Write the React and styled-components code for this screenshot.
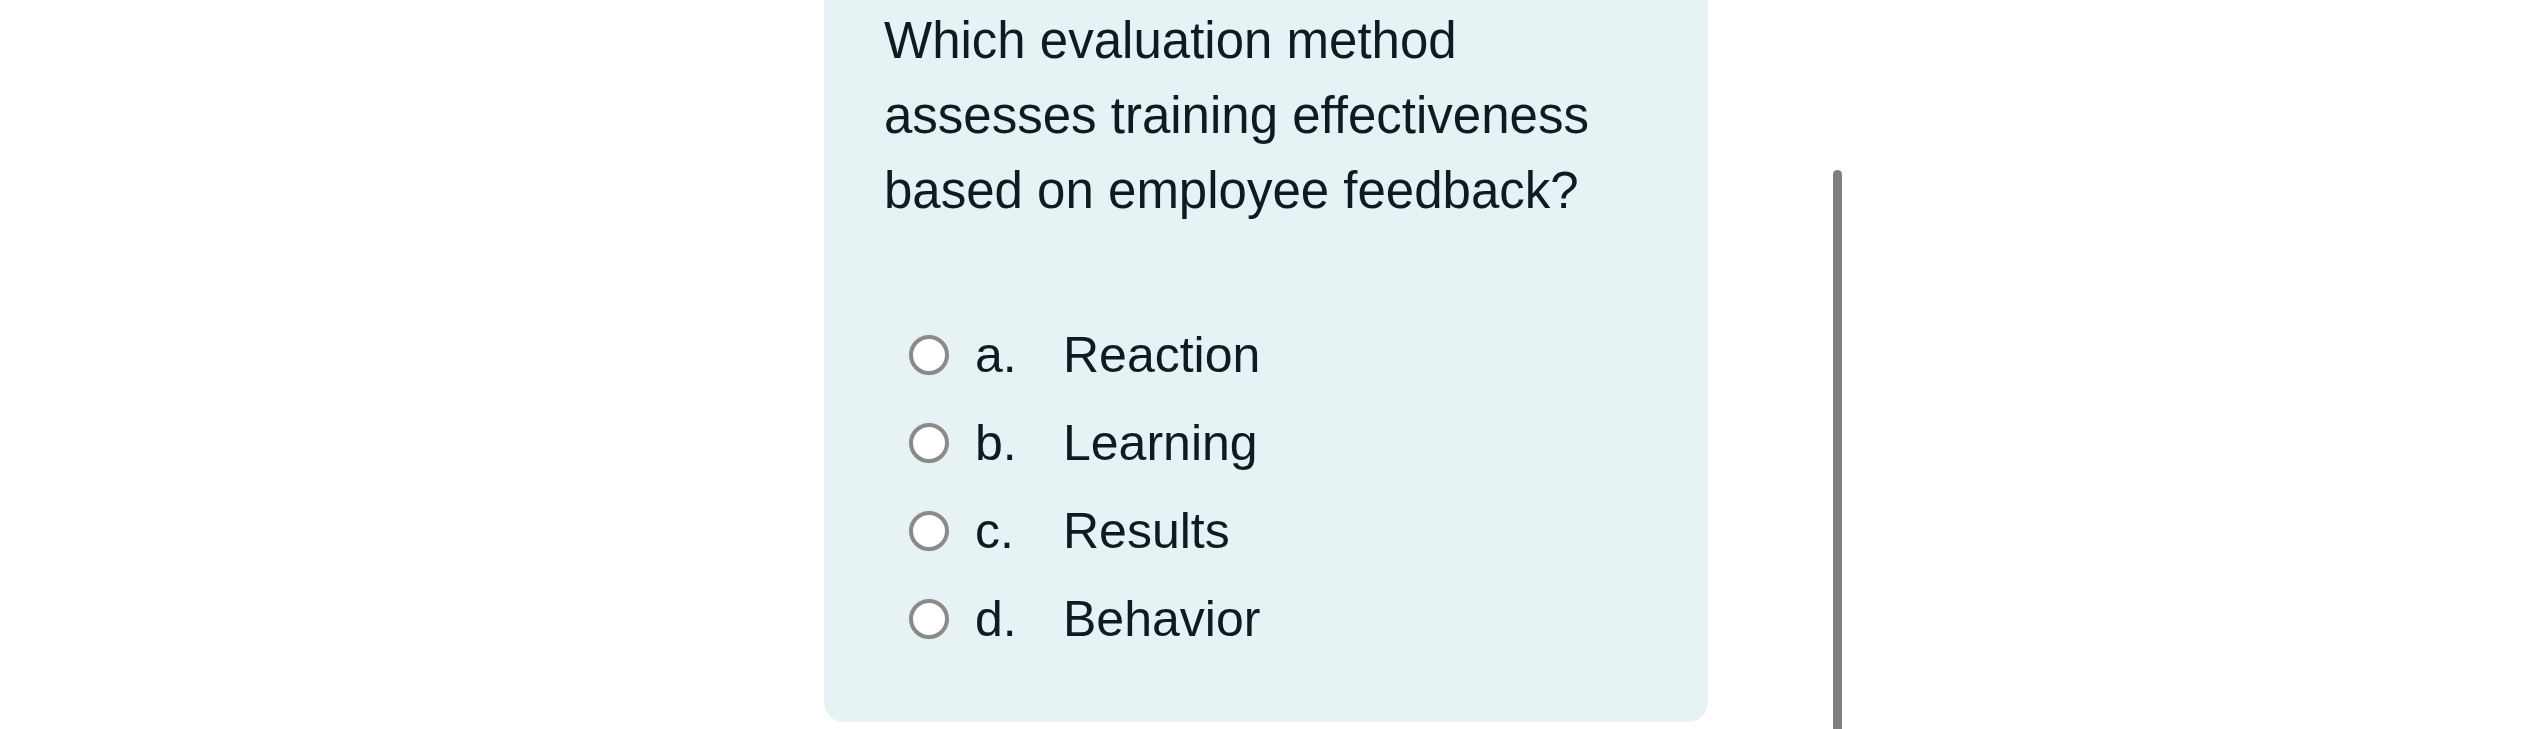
import React from 'react';
import styled, { createGlobalStyle } from 'styled-components';

const GlobalStyle = createGlobalStyle`
  html, body {
    margin: 0;
    padding: 0;
    background: #ffffff;
    overflow: hidden;
  }
  body {
    font-family: "Liberation Sans", Arial, sans-serif;
  }
`;

const Page = styled.div`
  position: relative;
  width: 100%;
  height: 729px;
  display: flex;
  justify-content: center;
  align-items: flex-start;
`;

const Card = styled.div`
  width: 884px;
  box-sizing: border-box;
  margin-top: -40px;
  padding: 43px 60px 59px 60px;
  background-color: #e6f2f4;
  border-radius: 20px;
  color: #0c1c21;
`;

const Question = styled.div`
  font-size: 51px;
  line-height: 75px;
  width: 740px;
`;

const OptionList = styled.ul`
  list-style: none;
  margin: 83px 0 0 0;
  padding: 0 0 0 25px;
`;

const OptionRow = styled.li`
  display: flex;
  align-items: center;
  height: 88px;
  font-size: 50px;
  line-height: 75px;
  cursor: pointer;
`;

const Radio = styled.span`
  width: 40px;
  height: 40px;
  box-sizing: border-box;
  border: 4.5px solid #8a8a8a;
  border-radius: 50%;
  background: #ffffff;
  flex-shrink: 0;
  margin-right: 26px;
`;

const Letter = styled.span`
  width: 88px;
  flex-shrink: 0;
`;

const ScrollThumb = styled.div`
  position: absolute;
  left: calc(50% + 567px);
  top: 170px;
  bottom: 0;
  width: 9px;
  background: #7f7f7f;
  border-radius: 5px 5px 0 0;
`;

const options = [
  { letter: 'a.', text: 'Reaction' },
  { letter: 'b.', text: 'Learning' },
  { letter: 'c.', text: 'Results' },
  { letter: 'd.', text: 'Behavior' },
];

function App() {
  return (
    <>
      <GlobalStyle />
      <Page>
        <Card>
          <Question>
            Which evaluation method assesses training effectiveness based on employee feedback?
          </Question>
          <OptionList>
            {options.map((o) => (
              <OptionRow key={o.letter}>
                <Radio />
                <Letter>{o.letter}</Letter>
                <span>{o.text}</span>
              </OptionRow>
            ))}
          </OptionList>
        </Card>
        <ScrollThumb />
      </Page>
    </>
  );
}

export default App;
